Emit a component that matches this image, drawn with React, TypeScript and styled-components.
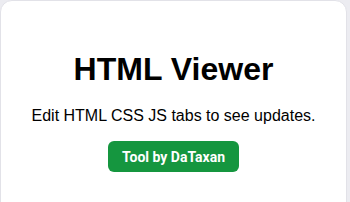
import { FC } from 'react'
import styled, { createGlobalStyle } from 'styled-components'

const GlobalStyle = createGlobalStyle`
  html, body {
    margin: 0;
    padding: 0;
    background: #ececf1;
    font-family: 'Liberation Sans', Arial, sans-serif;
  }
`

const App: FC = () => {
  return (
    <>
      <GlobalStyle />
      <Page>
        <Card>
          <Title>HTML Viewer</Title>
          <Lead>Edit HTML CSS JS tabs to see updates.</Lead>
          <Button type='button'>Tool by DaTaxan</Button>
        </Card>
      </Page>
    </>
  )
}

export default App

const Page = styled.div`
  width: 350px;
  height: 202px;
  overflow: hidden;
  padding-right: 3px;
  box-sizing: border-box;
`

const Card = styled.main`
  display: flex;
  flex-direction: column;
  align-items: center;
  height: 240px;
  box-sizing: border-box;
  padding-top: 50px;
  background: #ffffff;
  border: 1px solid #e2e2e8;
  border-radius: 12px;
  color: #000;
`

const Title = styled.h1`
  margin: 0;
  font-size: 32px;
  font-weight: 700;
  line-height: 37px;
`

const Lead = styled.p`
  margin: 19px 0 0;
  font-size: 16px;
  line-height: 18px;
`

const Button = styled.button`
  margin-top: 16px;
  height: 31px;
  padding: 0 14px;
  border: none;
  border-radius: 6px;
  background: #15963f;
  color: #ffffff;
  font-family: Roboto, 'Liberation Sans', sans-serif;
  font-size: 14px;
  font-weight: 700;
  cursor: pointer;
`
